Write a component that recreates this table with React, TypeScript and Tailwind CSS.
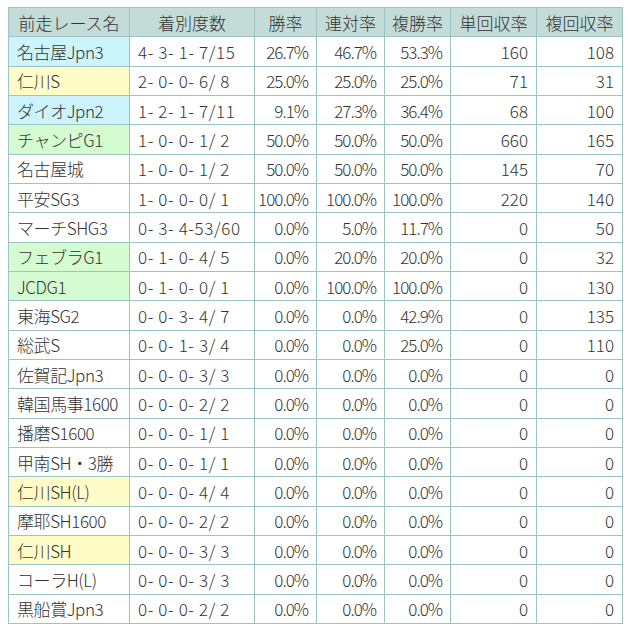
type Row = {
    name: string;
    tone?: "blue" | "yellow" | "green";
    record: string;
    win: string;
    quinella: string;
    place: string;
    winReturn: string;
    placeReturn: string;
};

const ROWS: Row[] = [
    { name: "名古屋Jpn3", tone: "blue", record: "4- 3- 1- 7/15", win: "26.7%", quinella: "46.7%", place: "53.3%", winReturn: "160", placeReturn: "108" },
    { name: "仁川S", tone: "yellow", record: "2- 0- 0- 6/ 8", win: "25.0%", quinella: "25.0%", place: "25.0%", winReturn: "71", placeReturn: "31" },
    { name: "ダイオJpn2", tone: "blue", record: "1- 2- 1- 7/11", win: "9.1%", quinella: "27.3%", place: "36.4%", winReturn: "68", placeReturn: "100" },
    { name: "チャンピG1", tone: "green", record: "1- 0- 0- 1/ 2", win: "50.0%", quinella: "50.0%", place: "50.0%", winReturn: "660", placeReturn: "165" },
    { name: "名古屋城", record: "1- 0- 0- 1/ 2", win: "50.0%", quinella: "50.0%", place: "50.0%", winReturn: "145", placeReturn: "70" },
    { name: "平安SG3", record: "1- 0- 0- 0/ 1", win: "100.0%", quinella: "100.0%", place: "100.0%", winReturn: "220", placeReturn: "140" },
    { name: "マーチSHG3", record: "0- 3- 4-53/60", win: "0.0%", quinella: "5.0%", place: "11.7%", winReturn: "0", placeReturn: "50" },
    { name: "フェブラG1", tone: "green", record: "0- 1- 0- 4/ 5", win: "0.0%", quinella: "20.0%", place: "20.0%", winReturn: "0", placeReturn: "32" },
    { name: "JCDG1", tone: "green", record: "0- 1- 0- 0/ 1", win: "0.0%", quinella: "100.0%", place: "100.0%", winReturn: "0", placeReturn: "130" },
    { name: "東海SG2", record: "0- 0- 3- 4/ 7", win: "0.0%", quinella: "0.0%", place: "42.9%", winReturn: "0", placeReturn: "135" },
    { name: "総武S", record: "0- 0- 1- 3/ 4", win: "0.0%", quinella: "0.0%", place: "25.0%", winReturn: "0", placeReturn: "110" },
    { name: "佐賀記Jpn3", record: "0- 0- 0- 3/ 3", win: "0.0%", quinella: "0.0%", place: "0.0%", winReturn: "0", placeReturn: "0" },
    { name: "韓国馬事1600", record: "0- 0- 0- 2/ 2", win: "0.0%", quinella: "0.0%", place: "0.0%", winReturn: "0", placeReturn: "0" },
    { name: "播磨S1600", record: "0- 0- 0- 1/ 1", win: "0.0%", quinella: "0.0%", place: "0.0%", winReturn: "0", placeReturn: "0" },
    { name: "甲南SH・3勝", record: "0- 0- 0- 1/ 1", win: "0.0%", quinella: "0.0%", place: "0.0%", winReturn: "0", placeReturn: "0" },
    { name: "仁川SH(L)", tone: "yellow", record: "0- 0- 0- 4/ 4", win: "0.0%", quinella: "0.0%", place: "0.0%", winReturn: "0", placeReturn: "0" },
    { name: "摩耶SH1600", record: "0- 0- 0- 2/ 2", win: "0.0%", quinella: "0.0%", place: "0.0%", winReturn: "0", placeReturn: "0" },
    { name: "仁川SH", tone: "yellow", record: "0- 0- 0- 3/ 3", win: "0.0%", quinella: "0.0%", place: "0.0%", winReturn: "0", placeReturn: "0" },
    { name: "コーラH(L)", record: "0- 0- 0- 3/ 3", win: "0.0%", quinella: "0.0%", place: "0.0%", winReturn: "0", placeReturn: "0" },
    { name: "黒船賞Jpn3", record: "0- 0- 0- 2/ 2", win: "0.0%", quinella: "0.0%", place: "0.0%", winReturn: "0", placeReturn: "0" },
];

const HEADERS = ["前走レース名", "着別度数", "勝率", "連対率", "複勝率", "単回収率", "複回収率"];

const TONE_BG = {
    blue: "bg-[#ccf4fc]",
    yellow: "bg-[#fffcc8]",
    green: "bg-[#d4fcd0]",
};

const cell = "h-[29.33px] border-r border-b border-[#9cc4c4] flex items-center";

export default function App() {
    return (
        <div className="bg-white w-[630px] h-[630px] pt-[7px] pl-[8px] text-[#333] text-[17px] leading-none font-light font-['Noto_Sans_CJK_JP',sans-serif]">
            <div className="grid grid-cols-[121px_125px_62px_68px_66px_86px_86px] w-[615px] border-l border-t border-[#9cc4c4]">
                {/* Header */}
                {HEADERS.map((h) => (
                    <div key={h} className={`${cell} justify-center bg-[#c4dcd8]`}>
                        {h}
                    </div>
                ))}

                {/* Rows */}
                {ROWS.map((r) => (
                    <div key={r.name} className="contents">
                        <div className={`${cell} pl-2 whitespace-nowrap tracking-tight ${r.tone ? TONE_BG[r.tone] : ""}`}>
                            {r.name}
                        </div>
                        <div className={`${cell} pl-2 whitespace-pre tracking-[0.6px]`}>{r.record}</div>
                        <div className={`${cell} justify-end pr-2 tracking-[-1px]`}>{r.win}</div>
                        <div className={`${cell} justify-end pr-2 tracking-[-1px]`}>{r.quinella}</div>
                        <div className={`${cell} justify-end pr-2 tracking-[-1px]`}>{r.place}</div>
                        <div className={`${cell} justify-end pr-2`}>{r.winReturn}</div>
                        <div className={`${cell} justify-end pr-2`}>{r.placeReturn}</div>
                    </div>
                ))}
            </div>
        </div>
    );
}
